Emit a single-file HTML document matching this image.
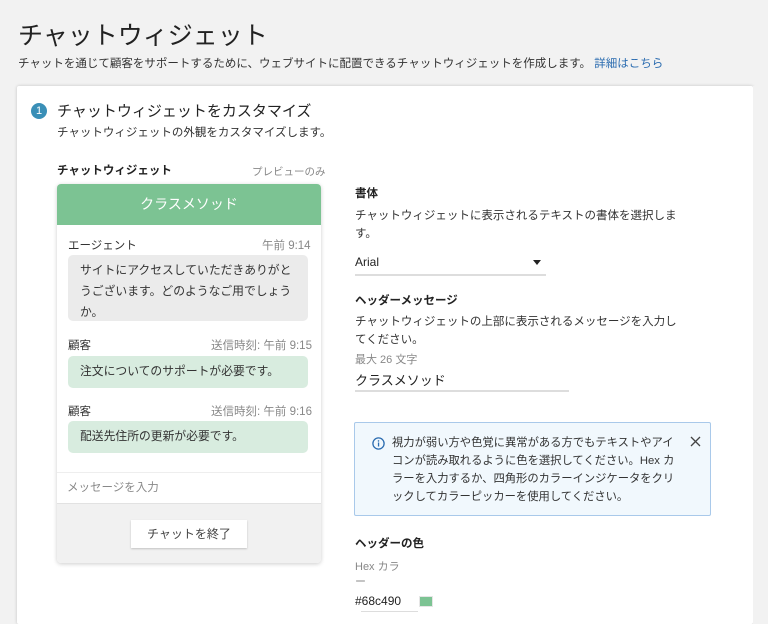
<!DOCTYPE html>
<html><head><meta charset="utf-8"><style>
*{margin:0;padding:0;box-sizing:border-box}
html,body{width:768px;height:624px;overflow:hidden}
body{background:#f2f2f2;font-family:"Liberation Sans","Noto Sans CJK JP",sans-serif;color:#222;position:relative}
.a{position:absolute;white-space:nowrap}
.card{position:absolute;left:17px;top:86px;width:736px;height:538px;background:#fff;box-shadow:0 0 3px rgba(0,0,0,.2);border-radius:2px}
.lbl{font-size:11.5px;font-weight:bold;color:#222}
.t12{font-size:11.5px;color:#333}
.gray{color:#888}
.bub{position:absolute;left:68px;width:240px;border-radius:5px;font-size:11.8px;line-height:21px;padding:5px 11px 0 12px;color:#333}
.line{position:absolute;height:1px;background:#ccc}
</style></head><body>
<div class="a" style="left:18px;top:16px;font-size:25px;color:#222">チャットウィジェット</div>
<div class="a t12" style="left:18px;top:55px;font-size:11.5px">チャットを通じて顧客をサポートするために、ウェブサイトに配置できるチャットウィジェットを作成します。 <span style="color:#2b6cb0">詳細はこちら</span></div>
<div class="card"></div>
<div class="a" style="left:31px;top:103px;width:16px;height:16px;border-radius:50%;background:#3a8fb7;color:#fff;font-size:11px;text-align:center;line-height:16px">1</div>
<div class="a" style="left:57px;top:100px;font-size:15px;color:#222">チャットウィジェットをカスタマイズ</div>
<div class="a t12" style="left:57px;top:124px">チャットウィジェットの外観をカスタマイズします。</div>
<div class="a lbl" style="left:57px;top:162px">チャットウィジェット</div>
<div class="a gray" style="left:252px;top:164px;font-size:10.5px">プレビューのみ</div>
<div class="a" style="left:57px;top:184px;width:264px;height:379px;background:#fff;border-radius:4px;box-shadow:0 1px 4px rgba(0,0,0,.2);overflow:hidden">
 <div style="height:41px;background:#7cc393;color:#fff;font-size:14px;text-align:center;line-height:40px">クラスメソッド</div>
</div>
<div class="a t12" style="left:68px;top:237px">エージェント</div>
<div class="a gray" style="left:262px;top:237px;font-size:11.5px">午前 9:14</div>
<div class="bub" style="top:255px;height:66px;background:#ebebeb;white-space:normal">サイトにアクセスしていただきありがとうございます。どのようなご用でしょうか。</div>
<div class="a t12" style="left:68px;top:337px">顧客</div>
<div class="a gray" style="left:211px;top:337px;font-size:11.5px">送信時刻: 午前 9:15</div>
<div class="bub" style="top:356px;height:32px;background:#d8ecdf">注文についてのサポートが必要です。</div>
<div class="a t12" style="left:68px;top:403px">顧客</div>
<div class="a gray" style="left:211px;top:403px;font-size:11.5px">送信時刻: 午前 9:16</div>
<div class="bub" style="top:421px;height:32px;background:#d8ecdf">配送先住所の更新が必要です。</div>
<div class="line" style="left:57px;top:472px;width:264px;background:#eee"></div>
<div class="a gray" style="left:67px;top:479px;font-size:11.5px">メッセージを入力</div>
<div class="a" style="left:57px;top:503px;width:264px;height:60px;background:#f1f1f1;border-top:1px solid #e2e2e2;border-radius:0 0 4px 4px"></div>
<div class="a" style="left:131px;top:520px;width:116px;height:28px;background:#fff;box-shadow:0 1px 2px rgba(0,0,0,.2);font-size:12px;color:#444;text-align:center;line-height:28px">チャットを終了</div>

<div class="a lbl" style="left:355px;top:185px">書体</div>
<div class="a t12" style="left:355px;top:207px;line-height:18px">チャットウィジェットに表示されるテキストの書体を選択しま<br>す。</div>
<div class="a" style="left:355px;top:255px;font-size:12px">Arial</div>
<div class="a" style="left:533px;top:260px;width:0;height:0;border-left:4px solid transparent;border-right:4px solid transparent;border-top:5px solid #222"></div>
<div class="line" style="left:355px;top:274px;width:191px;background:#ddd;height:2px"></div>
<div class="a lbl" style="left:355px;top:292px">ヘッダーメッセージ</div>
<div class="a t12" style="left:355px;top:313px;line-height:18px">チャットウィジェットの上部に表示されるメッセージを入力し<br>てください。</div>
<div class="a gray" style="left:355px;top:351px;font-size:11px">最大 26 文字</div>
<div class="a" style="left:355px;top:370px;font-size:13px">クラスメソッド</div>
<div class="line" style="left:355px;top:390px;width:214px;background:#ddd;height:2px"></div>

<div class="a" style="left:354px;top:422px;width:357px;height:94px;background:#f1f8fd;border:1px solid #a9c9ea;border-radius:2px"></div>
<svg class="a" style="left:372px;top:437px" width="13" height="13" viewBox="0 0 13 13"><circle cx="6.5" cy="6.5" r="5.6" fill="none" stroke="#2b6cb0" stroke-width="1.3"/><rect x="5.9" y="5.5" width="1.3" height="4" fill="#2b6cb0"/><circle cx="6.5" cy="3.9" r=".8" fill="#2b6cb0"/></svg>
<div class="a t12" style="left:392px;top:434px;line-height:18px;font-size:11.3px">視力が弱い方や色覚に異常がある方でもテキストやアイ<br>コンが読み取れるように色を選択してください。Hex カ<br>ラーを入力するか、四角形のカラーインジケータをクリ<br>ックしてカラーピッカーを使用してください。</div>
<svg class="a" style="left:690px;top:436px" width="11" height="11" viewBox="0 0 11 11"><path d="M1 1L10 10M10 1L1 10" stroke="#444" stroke-width="1.3"/></svg>
<div class="a lbl" style="left:355px;top:535px">ヘッダーの色</div>
<div class="a gray" style="left:355px;top:560px;font-size:11px;line-height:15px">Hex カラ<br>ー</div>
<div class="a" style="left:355px;top:594px;font-size:12px">#68c490</div>
<div class="line" style="left:361px;top:611px;width:57px;background:#ddd"></div>
<div class="a" style="left:420px;top:597px;width:12px;height:9px;background:#7cc393;outline:1px solid #e6e6e6"></div>
<div class="a" style="left:753px;top:86px;width:15px;height:538px;background:#f2f2f2"></div>
</body></html>
